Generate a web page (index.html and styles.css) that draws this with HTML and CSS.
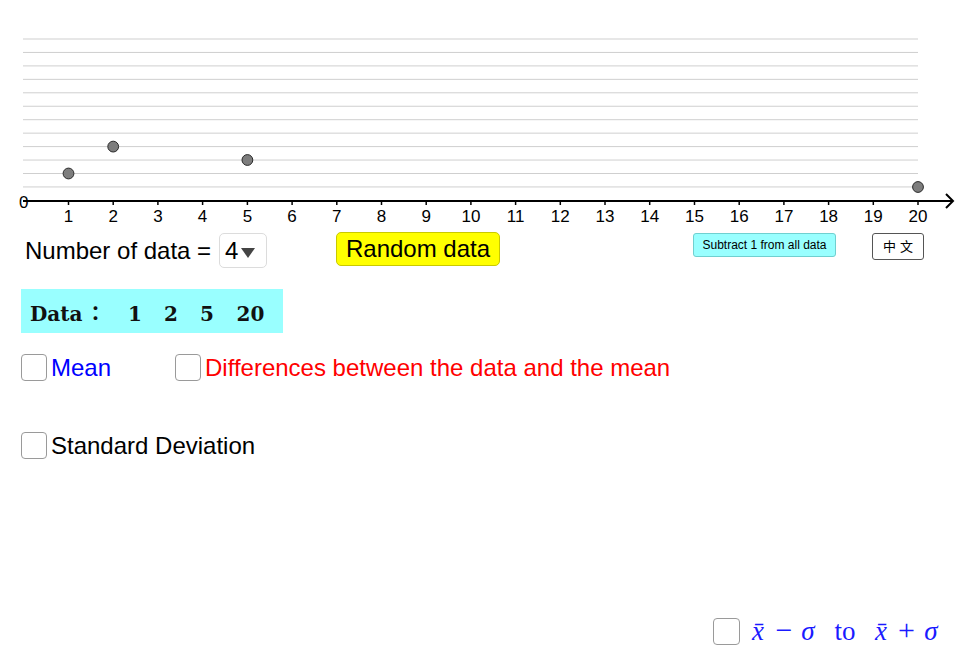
FILE: index.html
```html
<!DOCTYPE html>
<html>
<head>
<meta charset="utf-8">
<link rel="stylesheet" href="styles.css">
</head>
<body>
<svg class="graph" width="960" height="228" viewBox="0 0 960 228">
  <g class="grid">
    <line x1="23" x2="918" y1="39" y2="39"/>
    <line x1="23" x2="918" y1="52.45" y2="52.45"/>
    <line x1="23" x2="918" y1="65.9" y2="65.9"/>
    <line x1="23" x2="918" y1="79.35" y2="79.35"/>
    <line x1="23" x2="918" y1="92.8" y2="92.8"/>
    <line x1="23" x2="918" y1="106.25" y2="106.25"/>
    <line x1="23" x2="918" y1="119.7" y2="119.7"/>
    <line x1="23" x2="918" y1="133.15" y2="133.15"/>
    <line x1="23" x2="918" y1="146.6" y2="146.6"/>
    <line x1="23" x2="918" y1="160.05" y2="160.05"/>
    <line x1="23" x2="918" y1="173.5" y2="173.5"/>
    <line x1="23" x2="918" y1="186.95" y2="186.95"/>
  </g>
  <text class="zero" x="19" y="208">0</text>
  <line class="axis" x1="23" x2="953" y1="201" y2="201"/>
  <polyline class="axis" points="946,194 953,201 946,208"/>
  <g class="ticks">
    <line x1="68.5" x2="68.5" y1="201" y2="205"/>
    <line x1="113.2" x2="113.2" y1="201" y2="205"/>
    <line x1="157.9" x2="157.9" y1="201" y2="205"/>
    <line x1="202.6" x2="202.6" y1="201" y2="205"/>
    <line x1="247.4" x2="247.4" y1="201" y2="205"/>
    <line x1="292.1" x2="292.1" y1="201" y2="205"/>
    <line x1="336.8" x2="336.8" y1="201" y2="205"/>
    <line x1="381.5" x2="381.5" y1="201" y2="205"/>
    <line x1="426.2" x2="426.2" y1="201" y2="205"/>
    <line x1="470.9" x2="470.9" y1="201" y2="205"/>
    <line x1="515.6" x2="515.6" y1="201" y2="205"/>
    <line x1="560.3" x2="560.3" y1="201" y2="205"/>
    <line x1="605.0" x2="605.0" y1="201" y2="205"/>
    <line x1="649.7" x2="649.7" y1="201" y2="205"/>
    <line x1="694.5" x2="694.5" y1="201" y2="205"/>
    <line x1="739.2" x2="739.2" y1="201" y2="205"/>
    <line x1="783.9" x2="783.9" y1="201" y2="205"/>
    <line x1="828.6" x2="828.6" y1="201" y2="205"/>
    <line x1="873.3" x2="873.3" y1="201" y2="205"/>
    <line x1="918" x2="918" y1="201" y2="205"/>
  </g>
  <g class="labels">
    <text x="68.5" y="221.5">1</text>
    <text x="113.2" y="221.5">2</text>
    <text x="157.9" y="221.5">3</text>
    <text x="202.6" y="221.5">4</text>
    <text x="247.4" y="221.5">5</text>
    <text x="292.1" y="221.5">6</text>
    <text x="336.8" y="221.5">7</text>
    <text x="381.5" y="221.5">8</text>
    <text x="426.2" y="221.5">9</text>
    <text x="470.9" y="221.5">10</text>
    <text x="515.6" y="221.5">11</text>
    <text x="560.3" y="221.5">12</text>
    <text x="605.0" y="221.5">13</text>
    <text x="649.7" y="221.5">14</text>
    <text x="694.5" y="221.5">15</text>
    <text x="739.2" y="221.5">16</text>
    <text x="783.9" y="221.5">17</text>
    <text x="828.6" y="221.5">18</text>
    <text x="873.3" y="221.5">19</text>
    <text x="918" y="221.5">20</text>
  </g>
  <g class="points">
    <circle cx="68.5" cy="173.5" r="5.4"/>
    <circle cx="113.2" cy="146.6" r="5.4"/>
    <circle cx="247.4" cy="160" r="5.4"/>
    <circle cx="918" cy="187" r="5.4"/>
  </g>
</svg>

<div class="controls">
  <div class="num-label">Number of data =</div>
  <div class="select"><span class="sel-val">4</span><span class="caret"></span></div>
  <div class="btn-random">Random data</div>
  <div class="btn-subtract">Subtract 1 from all data</div>
  <div class="btn-lang">中文</div>
</div>

<div class="data-box">
  <span class="data-label">Data<span class="colon">：</span></span>
  <span class="num n1">1</span>
  <span class="num n2">2</span>
  <span class="num n3">5</span>
  <span class="num n4">20</span>
</div>

<div class="row row1">
  <div class="opt opt-mean"><span class="box"></span><span class="lbl blue">Mean</span></div>
  <div class="opt"><span class="box"></span><span class="lbl red">Differences between the data and the mean</span></div>
</div>

<div class="row row2">
  <div class="opt"><span class="box"></span><span class="lbl">Standard Deviation</span></div>
</div>

<div class="row row3">
  <span class="box box-sm"></span>
  <span class="formula">
    <span class="f c1"><i>x̄</i></span><span class="f c2 op">−</span><span class="f c3"><i>σ</i></span><span class="f c4">to</span><span class="f c5"><i>x̄</i></span><span class="f c6 op">+</span><span class="f c7"><i>σ</i></span>
  </span>
</div>
</body>
</html>
```

FILE: styles.css
```css
html, body {
  margin: 0;
  padding: 0;
  background: #ffffff;
}
body {
  width: 960px;
  height: 660px;
  overflow: hidden;
  font-family: "Liberation Sans", Arial, sans-serif;
  color: #000;
}
.graph {
  display: block;
}
.grid line {
  stroke: #cfcfcf;
  stroke-width: 1;
}
.axis {
  stroke: #000;
  stroke-width: 2;
  fill: none;
}
.ticks line {
  stroke: #000;
  stroke-width: 1.5;
}
.labels text {
  font-family: "Liberation Sans", Arial, sans-serif;
  font-size: 17px;
  text-anchor: middle;
  fill: #000;
}
.zero {
  font-family: "Liberation Sans", Arial, sans-serif;
  font-size: 17px;
  fill: #000;
}
.points circle {
  fill: #7d7d7d;
  stroke: #2a2a2a;
  stroke-width: 1;
}

.controls {
  display: flex;
  align-items: flex-start;
  height: 57px;
  margin-top: 4px;
}
.num-label {
  width: 194px;
  margin-left: 25px;
  margin-top: 5px;
  font-size: 24px;
  line-height: 28px;
}
.select {
  box-sizing: border-box;
  width: 48px;
  height: 35px;
  margin-top: 1px;
  border: 1px solid #dcdcdc;
  border-radius: 5px;
  display: flex;
  align-items: center;
  padding-left: 5px;
}
.sel-val {
  font-size: 24px;
  line-height: 28px;
}
.caret {
  width: 0;
  height: 0;
  margin-left: 3px;
  margin-top: 4px;
  border-left: 7.5px solid transparent;
  border-right: 7.5px solid transparent;
  border-top: 10px solid #444;
}
.btn-random {
  box-sizing: border-box;
  width: 164px;
  height: 34px;
  margin-left: 69px;
  background: #ffff00;
  border: 1px solid #c9c900;
  border-radius: 5px;
  font-size: 24px;
  line-height: 32px;
  text-align: center;
}
.btn-subtract {
  box-sizing: border-box;
  width: 143px;
  height: 24px;
  margin-left: 193px;
  margin-top: 1px;
  background: #99ffff;
  border: 1px solid #70d0d0;
  border-radius: 3px;
  font-size: 12px;
  line-height: 22px;
  text-align: center;
}
.btn-lang {
  box-sizing: border-box;
  width: 52px;
  height: 27px;
  margin-left: 36px;
  margin-top: 1px;
  border: 1.5px solid #555;
  border-radius: 3px;
  font-family: "Noto Sans CJK TC", "Noto Sans CJK SC", sans-serif;
  font-size: 13px;
  letter-spacing: 4px;
  padding-left: 4px;
  line-height: 23px;
  text-align: center;
}

.data-box {
  box-sizing: border-box;
  width: 262px;
  height: 44px;
  margin-left: 21px;
  background: #99ffff;
  display: flex;
  align-items: baseline;
  padding-left: 9px;
  padding-top: 11px;
  font-family: "DejaVu Serif", "Noto Sans CJK TC", serif;
  font-weight: bold;
  font-size: 20px;
  line-height: 28px;
  color: #111;
}
.data-label {
  width: 87px;
}
.colon {
  margin-left: 3px;
}
.num {
  text-align: center;
  width: 36px;
}
.num.n4 {
  width: 51px;
}

.row {
  display: flex;
  align-items: flex-start;
}
.row1 {
  margin-top: 21px;
  margin-left: 21px;
}
.row2 {
  margin-top: 50px;
  margin-left: 21px;
}
.row3 {
  margin-top: 158px;
  margin-left: 713px;
}
.opt {
  display: flex;
  align-items: flex-start;
}
.opt-mean {
  width: 154px;
}
.box {
  box-sizing: border-box;
  width: 26px;
  height: 27px;
  border: 1.5px solid #9a9a9a;
  border-radius: 4px;
  flex: none;
}
.box-sm {
  width: 27px;
  height: 27px;
}
.lbl {
  margin-left: 4px;
  font-size: 24px;
  line-height: 28px;
}
.blue { color: #0000ff; }
.red { color: #ff0000; }

.formula {
  display: flex;
  align-items: baseline;
  height: 30px;
  margin-left: 7px;
  margin-top: -3px;
  font-family: "Liberation Serif", "DejaVu Serif", serif;
  font-size: 25px;
  line-height: 30px;
  color: #1a1aff;
}
.f {
  display: inline-block;
  text-align: center;
}
.f i {
  font-style: italic;
  font-size: 27px;
}
.f.op {
  font-size: 30px;
}
.f.c4 {
  font-size: 27px;
}
.c1 { width: 22px; }
.c2 { width: 30px; }
.c3 { width: 18px; }
.c4 { width: 56px; }
.c5 { width: 16px; }
.c6 { width: 35px; }
.c7 { width: 14px; }
```
